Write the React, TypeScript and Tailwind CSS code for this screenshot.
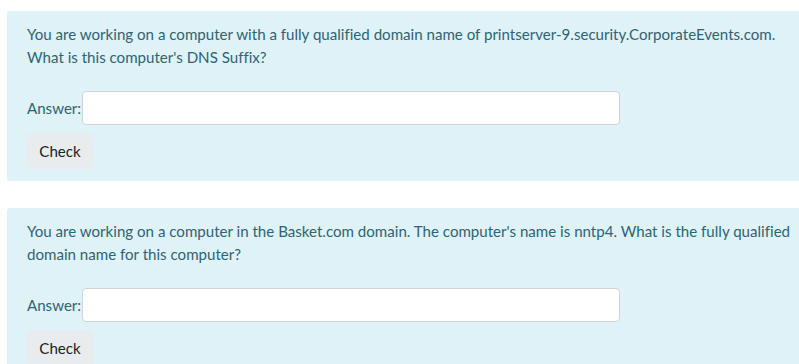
import React from "react";

function Question({ lines, mt }: { lines: string[]; mt: string }) {
  return (
    <div
      className={`${mt} w-[830px] rounded-[3px] bg-[#def2f8] px-[20px] pt-[12px] pb-[12px] text-[#2f6473]`}
    >
      <p className="m-0 text-[15.1px] leading-[22.5px]">
        {lines.map((l, i) => (
          <React.Fragment key={i}>
            {l}
            {i < lines.length - 1 && <br />}
          </React.Fragment>
        ))}
      </p>
      <div className="mt-[23px] flex items-center">
        <label className="w-[55px] shrink-0 text-[15.1px] leading-[22.5px]">Answer:</label>
        <input
          type="text"
          className="box-border h-[34px] w-[538px] rounded-[4px] border border-[#ced4da] bg-white px-3 outline-none"
        />
      </div>
      <button
        type="button"
        className="mt-[8px] h-[36px] w-[66px] rounded-[4px] bg-[#e9ecef] text-[15.1px] text-[#1d2125]"
      >
        Check
      </button>
    </div>
  );
}

export default function App() {
  return (
    <div
      className="h-[364px] w-[799px] overflow-hidden bg-white pt-[11px] pl-[7px] [font-variant-ligatures:none]"
      style={{ fontFamily: "Lato, 'Liberation Sans', sans-serif" }}
    >
      <Question
        mt="mt-0"
        lines={[
          "You are working on a computer with a fully qualified domain name of printserver-9.security.CorporateEvents.com.",
          "What is this computer's DNS Suffix?",
        ]}
      />
      <Question
        mt="mt-[27px]"
        lines={[
          "You are working on a computer in the Basket.com domain. The computer's name is nntp4. What is the fully qualified",
          "domain name for this computer?",
        ]}
      />
    </div>
  );
}
